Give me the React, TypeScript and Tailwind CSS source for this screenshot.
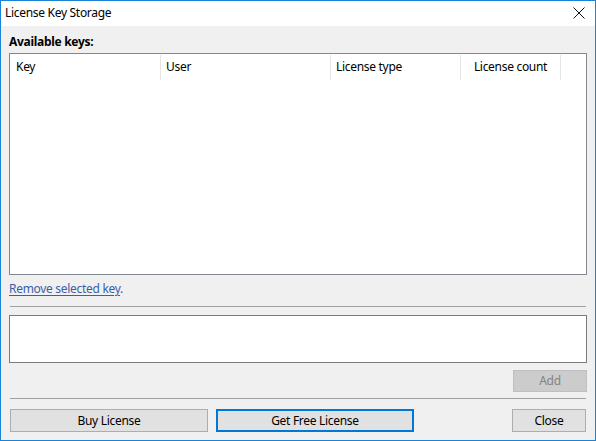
const font = { fontFamily: '"Segoe UI", "Noto Sans", "Liberation Sans", sans-serif' };

const columns = [
  { label: "Key", width: "w-[151px]", align: "text-left pl-[6px]" },
  { label: "User", width: "w-[170px]", align: "text-left pl-[5px]" },
  { label: "License type", width: "w-[130px]", align: "text-left pl-[5px]" },
  { label: "License count", width: "w-[100px]", align: "text-center" },
];

const Separator = () => <div className="h-px bg-[#a0a0a0] mx-[9px]" />;

export default function App() {
  return (
    <div
      className="w-[596px] h-[441px] border border-[#1883d7] bg-[#f0f0f0] flex flex-col text-[12px] tracking-[-0.3px] text-black overflow-hidden"
      style={font}
    >
      {/* title bar */}
      <div className="h-[25px] bg-white flex items-center justify-between pl-[4px] pr-[8px] shrink-0">
        <span className="text-[12px] leading-none -mt-[2px]">License Key Storage</span>
        <svg width="12" height="12" viewBox="0 0 12 12" className="mr-[2px] -mt-[1px]">
          <path d="M0.5 0.5 L11.5 11.5 M11.5 0.5 L0.5 11.5" stroke="#111" strokeWidth="1" />
        </svg>
      </div>

      <div className="flex flex-col flex-1">
        <div className="px-[8px] pt-[8px] pb-[4px] font-bold leading-[15px]">Available keys:</div>

        {/* list view */}
        <div className="mx-[8px] h-[222px] border border-[#828790] bg-white">
          <div className="flex h-[26px] items-center">
            {columns.map((c) => (
              <div
                key={c.label}
                className={`${c.width} ${c.align} h-[25px] flex items-center border-r border-[#e5e5e5] ${c.align === "text-center" ? "justify-center" : ""}`}
              >
                {c.label}
              </div>
            ))}
          </div>
        </div>

        <div className="px-[8px] pt-[5px] h-[31px]">
          <span className="text-[#3c5ea8] underline underline-offset-2">Remove selected key</span>
          <span className="text-[#3c5ea8]">.</span>
        </div>

        <Separator />

        <div className="mx-[8px] mt-[8px] h-[48px] border border-[#7a7a7a] bg-white" />

        <div className="flex justify-end px-[8px] mt-[7px]">
          <button className="w-[74px] h-[22px] bg-[#cccccc] border border-[#bfbfbf] text-[#838383]">
            Add
          </button>
        </div>

        <div className="mt-[6px]">
          <Separator />
        </div>

        <div className="flex items-center px-[9px] mt-[10px]">
          <button className="w-[198px] h-[23px] bg-[#e1e1e1] border border-[#adadad]">Buy License</button>
          <button className="w-[198px] h-[23px] bg-[#e1e1e1] border-2 border-[#0078d7] ml-[8px]">
            Get Free License
          </button>
          <div className="flex-1" />
          <button className="w-[74px] h-[23px] bg-[#e1e1e1] border border-[#adadad]">Close</button>
        </div>
      </div>
    </div>
  );
}
